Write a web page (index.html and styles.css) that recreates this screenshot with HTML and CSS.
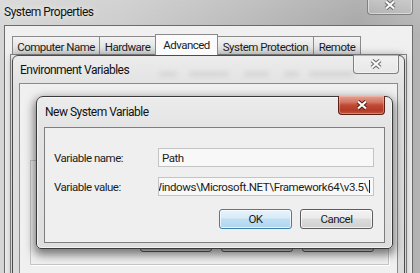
FILE: index.html
```html
<!DOCTYPE html>
<html>
<head>
<meta charset="utf-8">
<link rel="stylesheet" href="styles.css">
</head>
<body>
<div class="desk">
  <div class="win sysprops">
    <div class="titlebar sys-title">System Properties</div>
    <div class="closebtn inactive sys-close">
      <svg width="12" height="10" viewBox="0 0 12 10"><path d="M2 1.5L10 8.5M10 1.5L2 8.5" class="xo"/><path d="M2 1.5L10 8.5M10 1.5L2 8.5" class="xi"/></svg>
    </div>
    <div class="client sys-client">
      <div class="tabs">
        <div class="tab t-cn">Computer Name</div>
        <div class="tab t-hw">Hardware</div>
        <div class="tab sel t-adv">Advanced</div>
        <div class="tab t-sp">System Protection</div>
        <div class="tab t-rm">Remote</div>
      </div>
      <div class="tabpage"></div>
    </div>
  </div>

  <div class="win env">
    <div class="titlebar env-title">Environment Variables
      <div class="smudges"><i class="s1"></i><i class="s2"></i><i class="s3"></i><i class="s4"></i><i class="s5"></i></div>
    </div>
    <div class="closebtn inactive env-close">
      <svg width="12" height="10" viewBox="0 0 12 10"><path d="M2 1.5L10 8.5M10 1.5L2 8.5" class="xo"/><path d="M2 1.5L10 8.5M10 1.5L2 8.5" class="xi"/></svg>
    </div>
    <div class="client env-client">
      <div class="group">
        <div class="group-btns">
          <div class="btn">New...</div>
          <div class="btn">Edit...</div>
          <div class="btn">Delete</div>
        </div>
      </div>
    </div>
  </div>

  <div class="win dlg">
    <div class="titlebar dlg-title">New System Variable</div>
    <div class="closebtn red dlg-close">
      <svg width="12" height="10" viewBox="0 0 12 10"><path d="M2 1.5L10 8.5M10 1.5L2 8.5" class="xo"/><path d="M2 1.5L10 8.5M10 1.5L2 8.5" class="xi"/></svg>
    </div>
    <div class="client dlg-client">
      <div class="row">
        <div class="label">Variable name:</div>
        <div class="field"><span class="val">Path</span></div>
      </div>
      <div class="row">
        <div class="label">Variable value:</div>
        <div class="field end"><span class="val wide">Windows\Microsoft.NET\Framework64\v3.5\</span><span class="caret"></span></div>
      </div>
      <div class="actions">
        <div class="btn ok">OK</div>
        <div class="btn">Cancel</div>
      </div>
    </div>
  </div>
</div>
</body>
</html>
```

FILE: styles.css
```css
* { box-sizing: border-box; }
html, body { margin: 0; padding: 0; }
body {
  width: 420px;
  height: 273px;
  overflow: hidden;
  font-family: Roboto, "Liberation Sans", sans-serif;
  font-size: 11.5px;
  letter-spacing: -0.5px;
  color: #1c1c1c;
}
.desk {
  position: relative;
  width: 420px;
  height: 273px;
  overflow: hidden;
  background: #b8b8b8;
}
.win { position: absolute; display: flex; flex-direction: column; }

/* outer window */
.sysprops {
  left: -4px;
  top: -4px;
  width: 425px;
  height: 300px;
  padding: 0 8px;
  background:
    linear-gradient(180deg, rgba(255,255,255,0.15), rgba(255,255,255,0) 40px),
    linear-gradient(90deg, #d6d6d6 0%, #cbcbcb 30%, #b8b8b8 60%, #a6a6a6 85%, #b4b4b4 100%);
}
.titlebar { flex: none; display: flex; align-items: center; white-space: nowrap; }
.sys-title {
  height: 29px;
  padding-top: 3px;
  font-size: 12px;
  color: #111;
  text-shadow: 0 0 6px rgba(255,255,255,0.9);
}
.closebtn {
  position: absolute;
  display: flex;
  align-items: center;
  justify-content: center;
  border-radius: 0 0 4px 4px;
}
.closebtn svg { display: block; }
.xo { stroke: #4a4a4a; stroke-width: 4.2; fill: none; }
.xi { stroke: #fafafa; stroke-width: 2.2; fill: none; }
.inactive {
  border: 1px solid #808080;
  border-top: none;
  background: linear-gradient(180deg, rgba(255,255,255,0.25), rgba(255,255,255,0.05));
  box-shadow: inset 0 0 0 1px rgba(255,255,255,0.45);
}
.inactive .xo { stroke: #6a6a6a; }
.sys-close { right: 8px; top: 0; width: 46px; height: 19px; }

.client { flex: 1; border: 1px solid #6c6c6c; background: #f0f0f0; }
.sys-client { padding: 8px 5px 0; display: flex; flex-direction: column; }
.tabs { display: flex; align-items: flex-end; height: 21px; padding-left: 2px; flex: none; }
.tab {
  height: 19px;
  border: 1px solid #8a8a8a;
  border-bottom: none;
  background: linear-gradient(180deg, #f4f4f4 0%, #e6e6e6 50%, #d6d6d6 100%);
  display: flex;
  align-items: center;
  justify-content: center;
  white-space: nowrap;
  margin-right: -1px;
  padding-top: 1px;
}
.tab.sel { height: 21px; background: #fbfbfb; position: relative; z-index: 1; padding-bottom: 2px; }
.t-cn { width: 88px; }
.t-hw { width: 57px; }
.t-adv { width: 63px; }
.t-sp { width: 97px; }
.t-rm { width: 48px; }
.tabpage { flex: 1; border: 1px solid #8a8a8a; background: #fbfbfb; margin-top: -1px; }

/* environment variables window */
.env {
  left: 12px;
  top: 55px;
  width: 393px;
  height: 240px;
  padding: 0 6px;
  border: 1px solid #4c4c4c;
  border-radius: 6px 6px 0 0;
  background: linear-gradient(180deg, #ececec 0%, #e2e2e2 30px, #dadada 100%);
  box-shadow: 0 0 8px rgba(0,0,0,0.35);
}
.env-title { height: 27px; padding-left: 1px; position: relative; color: #111; font-size: 12px; }
.smudges { position: absolute; left: 0; top: 0; width: 100%; height: 100%; }
.smudges i {
  position: absolute;
  top: 16px;
  height: 4px;
  background: rgba(120,120,120,0.18);
  filter: blur(2.5px);
  border-radius: 2px;
}
.s1 { left: 170px; width: 40px; }
.s2 { left: 225px; width: 25px; }
.s3 { left: 265px; width: 15px; }
.s4 { left: 290px; width: 45px; }
.s5 { left: 140px; width: 18px; }
.env-close { right: 5px; top: -1px; width: 46px; height: 19px; }
.env-client { padding: 76px 8px 0 10px; display: flex; flex-direction: column; border-color: #8a8a8a; }
.group {
  height: 105px;
  border: 1px solid #c6c6c6;
  box-shadow: 1px 1px 0 #fff;
  display: flex;
  flex-direction: column;
  justify-content: flex-end;
  padding: 0 14px 12px 0;
}
.group-btns { display: flex; justify-content: flex-end; gap: 9px; }
.btn {
  height: 22px;
  width: 72px;
  border: 1px solid #5c5c5c;
  border-radius: 3px;
  background: linear-gradient(180deg, #f2f2f2 0%, #ebebeb 45%, #dddddd 50%, #cfcfcf 100%);
  box-shadow: inset 0 0 0 1px rgba(255,255,255,0.7);
  display: flex;
  align-items: center;
  justify-content: center;
}

/* new system variable dialog */
.dlg {
  left: 36px;
  top: 96px;
  width: 357px;
  height: 153px;
  padding: 0 7px 5px;
  border: 1px solid #3a3a3a;
  border-radius: 7px 7px 5px 5px;
  background: linear-gradient(180deg, #ececec 0%, #e4e4e4 30px, #dedede 100%);
  box-shadow: 0 4px 10px 2px rgba(0,0,0,0.5), inset 0 0 0 1px rgba(255,255,255,0.6);
}
.dlg-title { height: 30px; padding-left: 1px; color: #111; font-size: 12px; }
.red {
  border: 1px solid #5e2016;
  border-top: none;
  background: linear-gradient(180deg, #e3a293 0%, #d27563 35%, #c24a35 50%, #b23a26 80%, #c05a42 100%);
  box-shadow: inset 0 0 0 1px rgba(255,200,190,0.4);
}
.red .xo { stroke: #5a1f16; }
.dlg-close { right: 7px; top: -1px; width: 47px; height: 19px; }
.dlg-client {
  border-color: #7e7e7e;
  background: #efefef;
  padding: 20px 10px 0 9px;
  display: flex;
  flex-direction: column;
  gap: 10px;
}
.row { display: flex; align-items: center; height: 19px; }
.label { width: 104px; flex: none; }
.field {
  flex: 1;
  height: 19px;
  border: 1px solid #c4c4c4;
  background: #f8f8f8;
  display: flex;
  align-items: center;
  overflow: hidden;
  padding-left: 3px;
  white-space: nowrap;
}
.field.end { justify-content: flex-end; padding-right: 3px; padding-left: 0; }
.val { flex: none; }
.val.wide { letter-spacing: -0.4px; }
.caret { width: 1px; height: 13px; background: #222; margin-left: 1px; flex: none; }
.actions { display: flex; justify-content: flex-end; gap: 8px; margin-top: 3px; padding-right: 1px; }
.actions .btn { width: 73px; height: 20px; }
.btn.ok {
  border-color: #3c7fb1;
  background: linear-gradient(180deg, #e6f3fb 0%, #d6ebf8 45%, #bfdff3 50%, #b2d6ee 100%);
}
```
